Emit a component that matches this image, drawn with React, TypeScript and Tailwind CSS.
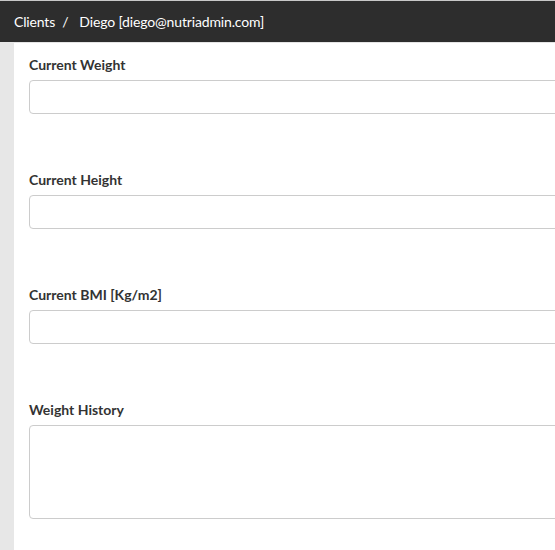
import React from "react";

const Field = ({ label, area }: { label: string; area?: boolean }) => (
  <div className="flex flex-col">
    <label className="text-[14px] font-bold text-[#333] leading-[20px] mb-[5px]">{label}</label>
    {area ? (
      <textarea className="block w-full h-[94px] border border-[#ccc] rounded-[4px] bg-white resize-none" />
    ) : (
      <input className="block w-full h-[34px] border border-[#ccc] rounded-[4px] bg-white" />
    )}
  </div>
);

export default function App() {
  return (
    <div className="w-[555px] h-[550px] overflow-hidden bg-white" style={{ fontFamily: "Lato, 'Open Sans', sans-serif" }}>
      <div className="h-[42px] bg-[#2d2d2d] border-t border-[#c8c8c8] flex items-center pl-[14px] pb-[1px] text-white text-[14px] tracking-[-0.15px]">
        <span>Clients</span>
        <span className="ml-[7px] mr-[11px]">/</span>
        <span>Diego [diego@nutriadmin.com]</span>
      </div>
      <div className="flex h-[508px]">
        <div className="w-[14px] shrink-0 bg-[#e7e7e7]" />
        <div className="flex-1 min-w-0 overflow-hidden border-t border-[#e5e5e5]">
          <div className="w-[700px] pl-[15px] pt-[12px] flex flex-col gap-[56px]">
            <Field label="Current Weight" />
            <Field label="Current Height" />
            <Field label="Current BMI [Kg/m2]" />
            <Field label="Weight History" area />
          </div>
        </div>
      </div>
    </div>
  );
}
